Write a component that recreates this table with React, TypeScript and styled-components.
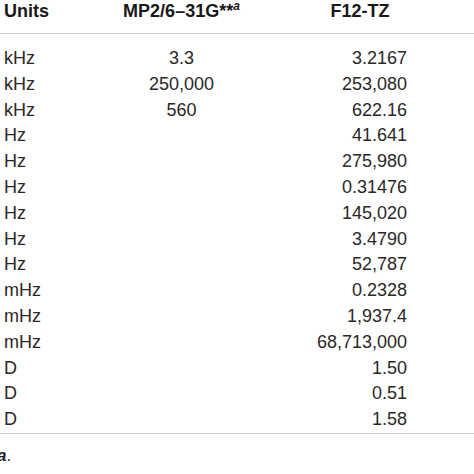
import { FC } from 'react'
import styled, { createGlobalStyle } from 'styled-components'

interface Row {
  unit: string
  mp2?: string
  f12: string
}

const rows: Row[] = [
  { unit: 'kHz', mp2: '3.3', f12: '3.2167' },
  { unit: 'kHz', mp2: '250,000', f12: '253,080' },
  { unit: 'kHz', mp2: '560', f12: '622.16' },
  { unit: 'Hz', f12: '41.641' },
  { unit: 'Hz', f12: '275,980' },
  { unit: 'Hz', f12: '0.31476' },
  { unit: 'Hz', f12: '145,020' },
  { unit: 'Hz', f12: '3.4790' },
  { unit: 'Hz', f12: '52,787' },
  { unit: 'mHz', f12: '0.2328' },
  { unit: 'mHz', f12: '1,937.4' },
  { unit: 'mHz', f12: '68,713,000' },
  { unit: 'D', f12: '1.50' },
  { unit: 'D', f12: '0.51' },
  { unit: 'D', f12: '1.58' }
]

const GlobalStyle = createGlobalStyle`
  html, body {
    margin: 0;
    padding: 0;
    background: #ffffff;
    overflow: hidden;
  }
  body {
    font-family: 'Liberation Sans', Arial, sans-serif;
    color: #231f20;
  }
`

const App: FC = () => {
  return (
    <>
      <GlobalStyle />
      <Page>
        <HeaderRow>
          <UnitCell>Units</UnitCell>
          <CenterCell>
            MP2/6–31G**<Sup>a</Sup>
          </CenterCell>
          <ValueCell $align="center">F12-TZ</ValueCell>
        </HeaderRow>
        <Body>
          {rows.map((row, i) => (
            <DataRow key={i}>
              <UnitCell>{row.unit}</UnitCell>
              <CenterCell>{row.mp2 ?? ''}</CenterCell>
              <ValueCell $align="right">{row.f12}</ValueCell>
            </DataRow>
          ))}
        </Body>
        <Footnote>
          <FootMark>a</FootMark>.
        </Footnote>
      </Page>
    </>
  )
}

const Page = styled.div`
  width: 474px;
  height: 474px;
  display: flex;
  flex-direction: column;
`

const gridCols = `
  display: grid;
  grid-template-columns: 114px 127px 162px;
  padding-left: 4px;
  font-size: 18px;
`

const HeaderRow = styled.div`
  ${gridCols}
  font-weight: bold;
  line-height: 20px;
  padding-top: 1px;
  padding-bottom: 12px;
  border-bottom: 1.5px solid #cfcfcf;
  color: #1a1718;
`

const Body = styled.div`
  padding-top: 12px;
  border-bottom: 1.5px solid #cfcfcf;
`

const DataRow = styled.div`
  ${gridCols}
  line-height: 25.8px;
  color: #2b2728;
`

const UnitCell = styled.div`
  white-space: nowrap;
`

const CenterCell = styled.div`
  text-align: center;
  white-space: nowrap;
`

const ValueCell = styled.div<{ $align: 'center' | 'right' }>`
  padding-left: 68px;
  text-align: ${(p) => p.$align};
  white-space: nowrap;
`

const Sup = styled.sup`
  font-style: italic;
  font-weight: bold;
  font-size: 12px;
  line-height: 0;
  vertical-align: 7px;
`

const Footnote = styled.div`
  margin-top: 12px;
  margin-left: -3px;
  font-size: 17px;
  line-height: 20px;
  color: #231f20;
`

const FootMark = styled.span`
  font-style: italic;
  font-weight: bold;
`

export default App
